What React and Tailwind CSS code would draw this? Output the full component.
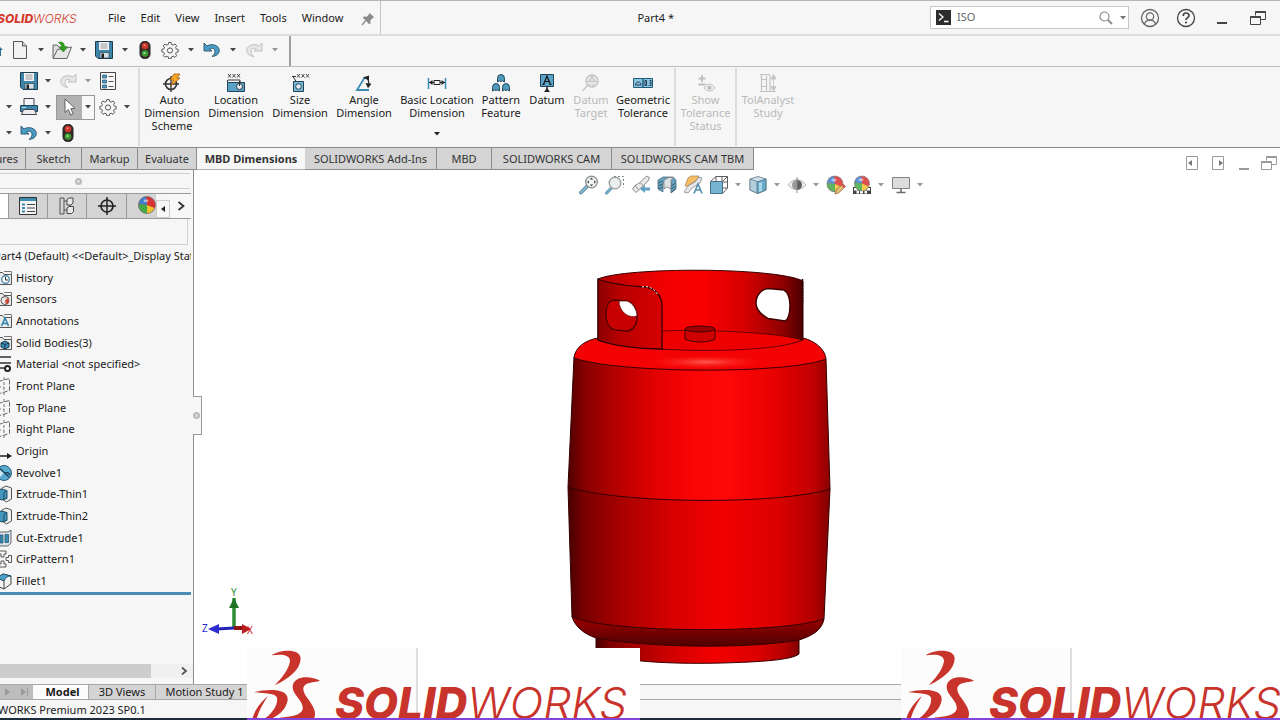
import React, { useState } from 'react';

const Svg = ({ w = 20, h = 20, box, className = "", children }) => (
  <svg width={w} height={h} viewBox={box || `0 0 ${w} ${h}`} fill="none" className={`shrink-0 ${className}`} aria-hidden="true">
    {children}
  </svg>
);

const Caret = ({ color = "#444" }) => (
  <Svg w={6} h={4}><path d="M0 0h6L3 3.5z" fill={color} /></Svg>
);

/* ---------- toolbar icons ---------- */
const NewDoc = () => (
  <Svg>
    <path d="M3.5 1.5h9l4 4.500v12.500h-13z" fill="#f1f1f1" stroke="#555" />
    <path d="M12.500 1.500v4.500h4" fill="#d5d5d5" stroke="#555" />
  </Svg>
);

const OpenDoc = () => (
  <Svg>
    <path d="M1 18V5h4l2 2h3" stroke="#666" fill="#ddd" />
    <path d="M1 18.500l4.500-9 14-2.500-4.500 11.500z" fill="#e6e6e6" stroke="#666" />
    <path d="M6.500 2.500C10 1 12.500 3 12.500 6.500h3L11.500 12 7 7.500h2.500C9.500 5 8.500 3.800 6.500 2.500z" fill="#2f9e1d" stroke="#217212" strokeWidth=".5" />
  </Svg>
);

const Save = () => (
  <Svg>
    <path d="M1.500 1.500h17v17H4l-2.500-2.500z" fill="#3f85aa" stroke="#1d3c50" />
    <path d="M5 2h10v8H5z" fill="#f5f5f5" />
    <path d="M6.500 4h7M6.500 6h7M6.500 8h7" stroke="#999" />
    <path d="M6 12.500h9V18H6z" fill="#d7dfe4" stroke="#23475c" strokeWidth=".7" />
    <path d="M7.500 13.500h2.500V18H7.500z" fill="#222" />
  </Svg>
);

const Light = () => (
  <Svg w={12} h={18}>
    <rect x="1" y=".5" width="10" height="17" rx="4.500" fill="#3b2a25" stroke="#222" />
    <circle cx="6" cy="5" r="3.300" fill="#c9362a" />
    <circle cx="5.500" cy="4.300" r="1" fill="#ff8f80" />
    <circle cx="6" cy="12.500" r="3.300" fill="#3c9a35" />
    <circle cx="5.500" cy="12" r="1.100" fill="#a2ec90" />
  </Svg>
);

const Gear = () => (
  <Svg w={18} h={18}>
    <path d="M7.800 1.500h2.400l.5 2 1.500.6 1.800-1.100 1.700 1.700-1.100 1.800.6 1.400 2 .6v2.300l-2 .6-.6 1.400 1.100 1.800-1.700 1.700-1.800-1.100-1.500.6-.5 2H7.800l-.5-2-1.500-.6L4 16.300l-1.700-1.700 1.100-1.800-.6-1.400-2-.6V8.500l2-.6.6-1.400-1.100-1.800L4 3l1.800 1.100 1.500-.6z" stroke="#555" strokeWidth="1" />
    <circle cx="9" cy="9.500" r="2.600" stroke="#555" />
  </Svg>
);

const Undo = ({ flip = false, dim = false }) => (
  <Svg w={18} h={16}>
    <g transform={flip ? "translate(18 0) scale(-1 1)" : undefined}>
      <path d="M1 1v8h8L6.500 7C9.500 5.300 12.500 7 12 10c-.2 1.700-1.200 3-3 4.500 4-.3 7.300-2.500 7.300-6C16.300 3.300 9 1 4 4z"
        fill={dim ? "#e6e6e6" : "#4b9cc4"} stroke={dim ? "#bbb" : "#24526c"} strokeWidth=".9" />
    </g>
  </Svg>
);

const Print = () => (
  <Svg>
    <path d="M5 8V1.500h10V8" fill="#f5f5f5" stroke="#445" />
    <path d="M1.500 8.500h17v6h-17z" fill="#3c86ad" stroke="#1f4459" />
    <path d="M4.500 12.500h11l2 5h-15z" fill="#ececec" stroke="#445" />
    <path d="M3 10.500h4" stroke="#bfe0f0" />
  </Svg>
);

const OptionList = () => (
  <Svg w={18} h={20}>
    <path d="M1.500 1.500h15v17h-15z" fill="#f7f7f7" stroke="#444" />
    <path d="M3.500 4h4v3h-4zM3.500 9h4v3h-4zM3.500 14h4v3h-4z" fill="#4b9cc4" stroke="#24526c" strokeWidth=".7" />
    <path d="M9.500 5.500h5M9.500 10.500h5M9.500 15.500h5" stroke="#555" />
  </Svg>
);

const Cursor = () => (
  <Svg w={14} h={18}><path d="M2 1v13.500l3.300-3 2.400 5.500 2.500-1.200-2.400-5.200 4.200-.3z" fill="#fff" stroke="#555" strokeWidth=".9" /></Svg>
);

const Pin = () => (
  <Svg w={14} h={14}>
    <path d="M8.500.8l4.700 4.700-1.500.4-2.400 2.500.2 3-1.200.8L1.800 5.700l.9-1.200 3 .2L8.200 2z" fill="#8a8a8a" />
    <path d="M4.800 8.300L1 13" stroke="#8a8a8a" strokeWidth="1.300" />
  </Svg>
);

/* ---------- ribbon icons ---------- */
const AutoIcon = () => (
  <Svg>
    <circle cx="9" cy="11" r="5.500" stroke="#333" strokeWidth="1.600" />
    <path d="M9 3v16M1 11h16" stroke="#333" strokeWidth="1.400" />
    <path d="M12 1h6l-3 4h3l-9 8 2.500-6H8z" fill="#f9a825" stroke="#a35d12" strokeWidth=".8" />
  </Svg>
);

const TinyX = ({ x }) => (
  <path d={`M${x} 1l3 3.500m0-3.500l-3 3.500m4.500-3.500l3 3.500m0-3.500l-3 3.500m4.500-3.500l3 3.500m0-3.500l-3 3.500`} stroke="#333" strokeWidth=".9" />
);

const LocationIcon = () => (
  <Svg>
    <TinyX x={2} />
    <path d="M1.500 7v2M14 7v5M2 7h12" stroke="#333" />
    <path d="M1.500 9.500h17v9h-17z" fill="#57a2c6" stroke="#1f4459" />
    <circle cx="13.500" cy="13.500" r="3" fill="#e6f2f7" stroke="#333" />
    <path d="M13.500 8v5" stroke="#333" />
  </Svg>
);

const SizeIcon = () => (
  <Svg>
    <TinyX x={7} />
    <path d="M2 3.500h4M3 3.500l5 8" stroke="#333" />
    <path d="M3.500 8.500h10v10h-10z" fill="#79b7d3" stroke="#1f4459" />
    <circle cx="8.500" cy="13.500" r="2.800" fill="#e6f2f7" stroke="#1f4459" />
  </Svg>
);

const AngleIcon = () => (
  <Svg>
    <path d="M11 4L3 17h12" stroke="#3a8cb5" strokeWidth="1.800" />
    <path d="M11 4.500c3.500 1 4.500 4 3.500 9" stroke="#222" strokeWidth="1.200" />
    <path d="M9 4.500l6-2v5zM11.500 10l6 .8-3.500 4.500z" fill="#222" />
  </Svg>
);

const BasicIcon = () => (
  <Svg>
    <path d="M1.500 5v11M18.500 5v11" stroke="#3a8cb5" strokeWidth="1.500" />
    <path d="M2 9.500h5M13 9.500h5" stroke="#222" />
    <path d="M7 7.500h6v4H7z" stroke="#222" />
    <path d="M2 9.500L5.500 7v5zM18 9.500L14.500 7v5z" fill="#222" />
  </Svg>
);

const PatternIcon = () => (
  <Svg>
    <g fill="#4f9abd" stroke="#173c50" strokeWidth=".9">
      <path d="M6.500 9V5.500a3.500 4 0 017 0V9l-2-1.200-1.500.8-1.500-.8zM1.500 18v-3.500a3.500 4 0 017 0V18l-2-1.200-1.500.8-1.500-.8zM11.500 18v-3.500a3.500 4 0 017 0V18l-2-1.200-1.500.8-1.500-.8z" />
    </g>
  </Svg>
);

const DatumIcon = () => (
  <Svg>
    <path d="M3.500 1.500h13v12h-13z" fill="#58a3c7" stroke="#1f4459" />
    <path d="M6.500 11.500L10 3l3.500 8.500M8 8.500h4M5.500 11.500h2M12.500 11.500h2" stroke="#111" strokeWidth="1.200" />
    <path d="M10 13.500V17" stroke="#222" strokeWidth="1.500" />
    <path d="M7 19l3-4 3 4z" fill="#222" />
  </Svg>
);

const TargetIcon = () => (
  <Svg>
    <circle cx="11" cy="8" r="6" fill="#e8e8e8" stroke="#c3c3c3" strokeWidth="1.300" />
    <path d="M5 8.500h12M8.500 8L11 3l2.500 5M8 11l1.500 2M13 11l-1.500 2M6.500 12.500L1.500 18" stroke="#c3c3c3" strokeWidth="1.200" />
  </Svg>
);

const GeoIcon = () => (
  <Svg>
    <path d="M.5 5.500h19v9H.5z" fill="#8cc3dd" stroke="#1f5d7d" />
    <path d="M10 5.500v9" stroke="#1f5d7d" strokeWidth="1.500" />
    <path d="M2.500 12h5.500c0-4-5.500-4-5.500 0zM12 7.500h1.500v5H12zM15 12.500h.5M16.500 7.500H18v5h-1.500M16.500 10H18" stroke="#1f3c50" />
  </Svg>
);

const StatusIcon = () => (
  <Svg>
    <path d="M6 2v7M2.500 5.500h7M2.500 11.500h7" stroke="#bdbdbd" strokeWidth="1.800" />
    <path d="M8 15c3-5 8-5 11 0-3 4-8 4-11 0z" stroke="#c3c3c3" fill="#eee" />
    <circle cx="13.500" cy="14.700" r="2" fill="#bbb" />
  </Svg>
);

const TolIcon = () => (
  <Svg>
    <path d="M2 1.500h10M2 18.500h16M3.500 2v16M3.500 6.500h5v-4M3.500 13.500h5v4M8.500 6.500v7M12 2v16" stroke="#c3c3c3" strokeWidth="1.200" />
    <path d="M15.500 4v12M15.500 1.500L13 6h5zM15.500 18L13 13.500h5z" fill="#c3c3c3" stroke="#c3c3c3" strokeWidth=".8" />
  </Svg>
);

/* ---------- heads-up view icons ---------- */
const Ball = ({ r = 7, cx = 9, cy = 8 }) => (
  <g>
    <circle cx={cx} cy={cy} r={r} fill="#d93232" />
    <path d={`M${cx} ${cy}L${cx - r} ${cy - 1}A${r} ${r} 0 0 1 ${cx - 1} ${cy - r}z`} fill="#3d7fd1" />
    <path d={`M${cx} ${cy}L${cx - r} ${cy - 1}A${r} ${r} 0 0 0 ${cx} ${cy + r}z`} fill="#43a947" />
    <path d={`M${cx} ${cy}L${cx} ${cy + r}A${r} ${r} 0 0 0 ${cx + r - 1} ${cy + 3}z`} fill="#f1c22e" />
    <circle cx={cx} cy={cy} r={r} stroke="#666" strokeWidth=".6" />
    <ellipse cx={cx - 1} cy={cy - r / 2} rx="2.500" ry="1.500" fill="#fff" opacity=".5" />
  </g>
);

const ZoomFit = () => (
  <Svg>
    <path d="M2 17.500l6-6" stroke="#2e6582" strokeWidth="3.600" strokeLinecap="round" />
    <path d="M2 17.500l6-6" stroke="#78b4d0" strokeWidth="1.800" strokeLinecap="round" />
    <circle cx="12.500" cy="7" r="5.800" fill="#eef3f5" stroke="#777" strokeWidth="1.300" />
    <path d="M12.500 2.500l1.800 2h-3.600zM12.500 11.500l1.800-2h-3.600zM8 7l2-1.800v3.600zM17 7l-2-1.800v3.600z" fill="#333" />
  </Svg>
);

const ZoomArea = () => (
  <Svg>
    <path d="M9 1.500h9.500v11" stroke="#666" strokeDasharray="2 2" />
    <path d="M1.500 18l5-5" stroke="#5d9ab7" strokeWidth="3.200" strokeLinecap="round" />
    <circle cx="10" cy="8" r="5.800" fill="#e5eaec" stroke="#8b8b8b" strokeWidth="1.300" />
  </Svg>
);

const PrevView = () => (
  <Svg>
    <path d="M1.500 14l2.500-3.500 5-3L15.500 1l3 1.500L17 6l-5.500 5.500L5 17.500z" fill="#e4e4e4" stroke="#777" />
    <path d="M9 7.500l3.500 3.500M4 10.500l3.500 4" stroke="#777" />
    <path d="M9 14l5-4v2.500h5v3h-5V18z" fill="#4291b8" />
  </Svg>
);

const SectionView = () => (
  <Svg>
    <path d="M1 5l5-3h10l3 3v9l-5 4V8H6v9l-5-3z" fill="#4892b7" stroke="#315566" strokeWidth=".8" />
    <path d="M7 5l5-2.500h5L14 5v9l-4-2-3 2z" fill="#d8dee1" stroke="#666" strokeWidth=".8" />
    <path d="M1.500 8l4-2M1.500 11l4-2M1.500 14l4-2M14.500 11l4-3M14.500 14l4-3M14.500 17l4-3" stroke="#173c50" />
  </Svg>
);

const DynAnno = () => (
  <Svg>
    <path d="M5 3l3-2h8l-3 5-9 5H2z" fill="#f4b24a" stroke="#9b763f" strokeWidth=".8" />
    <path d="M1 17l4-6 7-4 4-5 3 1-2 5-8 5-4 5z" fill="#e2e2e2" stroke="#777" strokeWidth=".8" />
    <path d="M11 18.500l4-9.500 4 9.500M12.500 15h5" stroke="#3779a0" strokeWidth="1.600" />
  </Svg>
);

const ViewOrient = () => (
  <Svg>
    <path d="M1.500 6.500h12v12h-12z" fill="#5fa9cb" stroke="#285a74" />
    <path d="M2 6L7 1.500h11.500V13l-5 5.500M13.500 6.500l5-5M7 1.500v5M13 1.500v5M18.500 7h-5M18.500 13h-5" stroke="#444" />
  </Svg>
);

const DisplayStyle = () => (
  <Svg>
    <path d="M2 4l8-2.500 8 2.500v11l-8 3.500L2 15z" fill="#c9dce6" stroke="#5e7986" />
    <path d="M2 4l8 3v11.500L2 15z" fill="#a8c8d7" stroke="#5e7986" />
    <path d="M9 7l9-3v11l-9 3.500z" fill="#4f9cc0" stroke="#3d6a80" />
    <path d="M11 8l3-1v9l-3 1z" fill="#9bd0e8" />
  </Svg>
);

const HideShow = () => (
  <Svg>
    <path d="M1 10c5-7 13-7 18 0-5 6-13 6-18 0z" fill="#ececec" stroke="#aaa" />
    <path d="M10 5a5 5 0 000 10z" fill="#888" />
    <path d="M10 5a5 5 0 010 10z" fill="#444" />
    <path d="M10 2v16" stroke="#777" />
  </Svg>
);

const EditAppearance = () => (
  <Svg>
    <Ball r={8} cy={9} />
    <path d="M9 19l1-4 7-6 2.500 2.500-7 6.500z" fill="#e4b15a" stroke="#7d4d27" strokeWidth=".8" />
    <path d="M15.500 10.500l2.500 2.500 1.500-1.500L17 9z" fill="#c73b31" />
  </Svg>
);

const ApplyScene = () => (
  <Svg>
    <path d="M1 12h18v7H1z" fill="#222" />
    <path d="M2 13h3v2.500H2zM15 13h3v2.500h-3zM8 15.500h3v3H8zM4.500 15.500h2.500v3H4.500zM12.500 15.500H15v3h-2.500z" fill="#fff" />
    <Ball r={7.500} cx={10} cy={8.500} />
  </Svg>
);

const ViewSettings = () => (
  <Svg>
    <path d="M1.500 2.500h17v11h-17z" fill="#d6d6d6" stroke="#6b6b6b" />
    <path d="M10 14v3M5.500 17.500h9" stroke="#555" strokeWidth="1.600" />
  </Svg>
);

/* ---------- feature tree icons ---------- */
const Folder = ({ children }) => (
  <Svg w={16} h={16}>
    <path d="M.5 14.500v-12h6l1.500 2h7.500v10z" fill="#ececec" stroke="#555" />
    <path d="M8 1.500h7.500v3" stroke="#777" />
    {children}
  </Svg>
);
const HistoryIcon = () => <Folder><circle cx="9.500" cy="9.500" r="3.800" fill="#fff" stroke="#4d8eae" strokeWidth="1.400" /><path d="M9.500 7v3h2.500" stroke="#333" /></Folder>;
const SensorIcon = () => <Folder><circle cx="9" cy="9.500" r="4" fill="#e8e8e8" stroke="#555" /><path d="M9 9.500l3.500-3 .5 5-3 2z" fill="#cf4834" /></Folder>;
const NotesIcon = () => <Folder><path d="M5.500 13l3.500-8 3.500 8M7 10.500h4" stroke="#3484ae" strokeWidth="1.600" /></Folder>;
const BodiesIcon = () => <Folder><path d="M5 8l4-2 4 2v4l-4 2-4-2z" fill="#3c8db4" stroke="#173c50" /><path d="M5 8l4 1.500L13 8M9 9.500V14" stroke="#173c50" /></Folder>;
const MaterialIcon = () => (
  <Svg w={16} h={16}>
    <path d="M0 1h15M0 7h15M0 12h8" stroke="#333" strokeWidth="1.600" />
    <circle cx="11.500" cy="12.500" r="2.500" fill="#fff" stroke="#222" strokeWidth="2" />
  </Svg>
);
const PlaneIcon = () => (
  <Svg w={16} h={18}>
    <path d="M2 4.500L13.500 1.500v12L2 17z" stroke="#666" strokeDasharray="5 1.500" />
    <path d="M8 0v18M2 10h6" stroke="#777" strokeDasharray="3 2" />
  </Svg>
);
const OriginIcon = () => (
  <Svg w={16} h={18}><path d="M3 3v11h9" stroke="#222" strokeWidth="1.400" /><path d="M11 11l5 3-5 3z" fill="#222" /></Svg>
);
const RevolveIcon = () => (
  <Svg w={18} h={18}>
    <circle cx="8" cy="9" r="7.500" fill="#58a9cf" stroke="#2b5d77" />
    <path d="M3 5l5 4-4 4" fill="#cfe8f3" />
    <path d="M3 4l10 9M9 9c2-1 4 0 5 2" stroke="#173c50" strokeWidth="1.300" />
  </Svg>
);
const ExtrudeIcon = () => (
  <Svg w={16} h={18}>
    <path d="M6 3l4-2 5.500 2v11l-5 3-4.500-3z" fill="#efefef" stroke="#555" />
    <path d="M1 6l4-2 6 1.500v8L6 15l-5-2z" fill="#4397bf" stroke="#1e4a61" />
    <path d="M11 5.500l-3 2V14" stroke="#1e4a61" />
  </Svg>
);
const CutIcon = () => (
  <Svg w={16} h={18}>
    <path d="M1 3h11l3-2v13l-3 3H1z" fill="#d9e3e8" stroke="#666" />
    <path d="M4 6h3v8H4zM9 5.500h3.500v8H9z" fill="#3c8db4" stroke="#24526c" strokeWidth=".7" />
  </Svg>
);
const CirIcon = () => (
  <Svg w={16} h={18}>
    <path d="M2 1h8v3H8v3H5V4H2zM15.500 5.500v7h-3v-2H10v-3h2.500v-2zM2 17h8v-3H8v-3H5v3H2z" stroke="#555" />
  </Svg>
);
const FilletIcon = () => (
  <Svg w={16} h={18}>
    <path d="M1 6l6-4 8 2v8l-7 5-7-3z" fill="#f2f2f2" stroke="#444" />
    <path d="M1 6l6-4 8 2c-4 0-6 2-7 5z" fill="#4ba1c8" stroke="#24526c" />
    <path d="M8 9v8" stroke="#444" />
  </Svg>
);

const ribbon = [
  { label: ["Auto", "Dimension", "Scheme"], icon: AutoIcon, width: "w-16" },
  { label: ["Location", "Dimension"], icon: LocationIcon, width: "w-16" },
  { label: ["Size", "Dimension"], icon: SizeIcon, width: "w-16" },
  { label: ["Angle", "Dimension"], icon: AngleIcon, width: "w-16" },
  { label: ["Basic Location", "Dimension"], icon: BasicIcon, width: "w-[82px]", menu: true },
  { label: ["Pattern", "Feature"], icon: PatternIcon, width: "w-[46px]" },
  { label: ["Datum"], icon: DatumIcon, width: "w-[46px]" },
  { label: ["Datum", "Target"], icon: TargetIcon, width: "w-[42px]", disabled: true },
  { label: ["Geometric", "Tolerance"], icon: GeoIcon, width: "w-[62px]" },
  { label: ["Show", "Tolerance", "Status"], icon: StatusIcon, width: "w-[61px]", disabled: true, divider: true },
  { label: ["TolAnalyst", "Study"], icon: TolIcon, width: "w-16", disabled: true, divider: true },
];

const tabs = [
  { name: "Features", width: "w-[26px]" },
  { name: "Sketch", width: "w-[56px]" },
  { name: "Markup", width: "w-[56px]" },
  { name: "Evaluate", width: "w-[59px]" },
  { name: "MBD Dimensions", width: "w-[108px]" },
  { name: "SOLIDWORKS Add-Ins", width: "w-[132px]" },
  { name: "MBD", width: "w-[55px]" },
  { name: "SOLIDWORKS CAM", width: "w-[120px]" },
  { name: "SOLIDWORKS CAM TBM", width: "w-[142px]" },
];

const features = [
  ["History", HistoryIcon],
  ["Sensors", SensorIcon],
  ["Annotations", NotesIcon],
  ["Solid Bodies(3)", BodiesIcon],
  ["Material <not specified>", MaterialIcon],
  ["Front Plane", PlaneIcon],
  ["Top Plane", PlaneIcon],
  ["Right Plane", PlaneIcon],
  ["Origin", OriginIcon],
  ["Revolve1", RevolveIcon],
  ["Extrude-Thin1", ExtrudeIcon],
  ["Extrude-Thin2", ExtrudeIcon],
  ["Cut-Extrude1", CutIcon],
  ["CirPattern1", CirIcon],
  ["Fillet1", FilletIcon],
];

const hud = [
  [ZoomFit], [ZoomArea], [PrevView], [SectionView], [DynAnno], [ViewOrient, true],
  [DisplayStyle, true], [HideShow, true], [EditAppearance], [ApplyScene, true], [ViewSettings, true],
];

const Cell = ({ label, className = "w-[21px]", children }) => (
  <button aria-label={label} className={`flex shrink-0 items-center justify-center ${className}`}>{children}</button>
);

const Restore = ({ color }) => (
  <Svg w={16} h={14}>
    <path d="M5.500 4.500v-4h10v8h-5" stroke={color} /><path d="M5.500 1h10" stroke={color} strokeWidth="2" />
    <path d="M.5 5.500h10v8H.5z" stroke={color} /><path d="M.5 6h10" stroke={color} strokeWidth="2" />
  </Svg>
);

const TitleBar = () => (
  <header className="flex h-9 shrink-0 border-t border-b-2 border-t-[#b5b5b5] border-b-[#dcdcdc]">
    <div className="flex shrink-0 items-center border-r border-[#c4c4c4] pr-1 pt-0.5">
      <div className="-ml-[3px] w-[111px] font-[Inter,sans-serif] text-[12px] italic text-[#d5392c]">
        <b className="font-extrabold">SOLID</b><span className="font-light">WORKS</span>
      </div>
      <nav className="flex gap-[15px]">
        {["File", "Edit", "View", "Insert", "Tools", "Window"].map((m) => <button key={m}>{m}</button>)}
      </nav>
      <Cell label="Pin menu" className="ml-[17px] w-4"><Pin /></Cell>
    </div>
    <h1 className="flex flex-1 items-center justify-center pt-0.5">Part4 *</h1>
    <div className="flex items-center pr-1">
      <div className="mr-[3px] flex h-[23px] w-[199px] items-center border border-[#c6c6c6] bg-white px-[5px]">
        <Svg w={15} h={15}>
          <path d="M0 0h15v15H0z" fill="#2c2c2c" />
          <path d="M3 3.500l4 3.500-4 3.500M8 11.500h4.500" stroke="#fff" strokeWidth="1.300" />
        </Svg>
        <input aria-label="Search commands" defaultValue="ISO" className="ml-1.5 min-w-0 flex-1 text-[#666] outline-none" />
        <Svg w={14} h={14}>
          <circle cx="5.500" cy="5.500" r="4.500" stroke="#888" strokeWidth="1.200" /><path d="M9 9l4 4" stroke="#888" strokeWidth="1.800" />
        </Svg>
        <Cell label="Search options" className="ml-1.5 -mr-1 w-2"><Caret color="#777" /></Cell>
      </div>
      <Cell label="Account" className="w-9">
        <Svg w={20} h={20}>
          <circle cx="10" cy="10" r="8.500" stroke="#666" strokeWidth="1.300" />
          <circle cx="10" cy="8.500" r="3.700" stroke="#666" strokeWidth="1.200" />
          <path d="M4.500 16c1-3 3-3.800 5.500-3.800s4.500.8 5.500 3.800" stroke="#666" strokeWidth="1.200" />
        </Svg>
      </Cell>
      <Cell label="Help" className="w-9">
        <Svg w={20} h={20}>
          <circle cx="10" cy="10" r="8.500" stroke="#444" strokeWidth="1.300" />
          <path d="M7.200 8c0-4 5.800-3.800 5.800-.5 0 2-3 2.200-3 4.500" stroke="#444" strokeWidth="1.700" /><circle cx="10" cy="14.500" r="1.100" fill="#444" />
        </Svg>
      </Cell>
      <Cell label="Minimize" className="w-9"><Svg w={10} h={12}><path d="M0 11h10" stroke="#444" strokeWidth="2" /></Svg></Cell>
      <Cell label="Restore" className="w-9"><Restore color="#444" /></Cell>
    </div>
  </header>
);

const QuickBar = () => (
  <div className="flex h-[31px] shrink-0 border-b border-[#c0c0c0]">
    <div className="flex w-[291px] items-center border-r-2 border-[#a0a0a0] pb-0.5">
      <Cell label="Home" className="w-[9px] justify-start!"><Svg w={4} h={14}><path d="M-5 7l3-5 5 5h-2v6h-6" fill="#2f6f92" /></Svg></Cell>
      <Cell label="New"><NewDoc /></Cell><Cell label="New options"><Caret /></Cell>
      <Cell label="Open"><OpenDoc /></Cell><Cell label="Open options"><Caret /></Cell>
      <Cell label="Save"><Save /></Cell><Cell label="Save options"><Caret /></Cell>
      <Cell label="Rebuild" className="w-5"><Light /></Cell>
      <Cell label="Options" className="ml-1 w-[21px]"><Gear /></Cell><Cell label="More options"><Caret /></Cell>
      <Cell label="Undo"><Undo /></Cell><Cell label="Undo list"><Caret /></Cell>
      <Cell label="Redo"><Undo flip dim /></Cell><Cell label="Redo list"><Caret color="#999" /></Cell>
    </div>
  </div>
);

const Ribbon = () => (
  <div className="flex h-[81px] shrink-0 border-b border-[#8c8c8c] py-px">
    <div className="flex w-[140px] flex-col border-r-2 border-[#dcdcdc]">
      <div className="flex h-[26px] items-center pl-[18px]">
        <Cell label="Save"><Save /></Cell><Cell label="Save options" className="w-[18px]"><Caret /></Cell>
        <Cell label="Redo"><Undo flip dim /></Cell><Cell label="Redo list" className="w-[19px]"><Caret color="#999" /></Cell>
        <Cell label="File properties"><OptionList /></Cell>
      </div>
      <div className="flex h-[26px] items-center">
        <Cell label="More" className="w-[18px]"><Caret /></Cell>
        <Cell label="Print"><Print /></Cell><Cell label="Print options" className="w-[17px]"><Caret /></Cell>
        <div className="flex h-[25px] border border-[#999]">
          <Cell label="Select" className="w-[25px] bg-[#b1b1b1]"><Cursor /></Cell>
          <Cell label="Select options" className="w-3 bg-[#f8f8f8]"><Caret /></Cell>
        </div>
        <Cell label="Options" className="ml-[2px] w-[21px]"><Gear /></Cell><Cell label="More options" className="w-[18px]"><Caret /></Cell>
      </div>
      <div className="flex h-[25px] items-center">
        <Cell label="More" className="w-[18px]"><Caret /></Cell>
        <Cell label="Undo"><Undo /></Cell><Cell label="Undo list" className="w-[18px]"><Caret /></Cell>
        <Cell label="Rebuild"><Light /></Cell>
      </div>
    </div>
    {ribbon.map(({ label, icon: Icon, width, menu, disabled, divider }) => (
      <button
        key={label.join(" ")}
        disabled={disabled}
        className={`flex shrink-0 flex-col items-center pt-[5px] leading-[13px] ${width} ${disabled ? "text-[#b9b9b9]" : ""} ${divider ? "border-l-2 border-[#dcdcdc]" : ""}`}
      >
        <Icon />
        <span>
          {label.map((line) => <span key={line} className="block whitespace-nowrap">{line}</span>)}
        </span>
        {menu && <span className="mt-[13px]"><Caret color="#222" /></span>}
      </button>
    ))}
  </div>
);

const TabRow = () => {
  const [active, setActive] = useState("MBD Dimensions");

  return (
    <div className="flex h-[22px] shrink-0 justify-between bg-white">
      <div role="tablist" className="flex">
        {tabs.map(({ name, width }) => (
          <button
            key={name}
            role="tab"
            aria-selected={active === name}
            onClick={() => setActive(name)}
            className={`flex shrink-0 items-center justify-center overflow-hidden whitespace-nowrap border-b pt-px ${width} ${name === "Features" ? "justify-end! pr-[7px]" : ""} ${active === name ? "border-[#b0b0b0] bg-[#f7f7f7] font-bold text-[#333]" : "border-r border-[#8c8c8c] bg-[#d4d4d4] text-[#333]"}`}
          >
            {name}
          </button>
        ))}
      </div>
      <div className="flex items-end">
        <Cell label="Collapse left" className="w-[26px]"><Svg w={12} h={14}><path d="M.5.500h11v13H.5z" stroke="#999" /><path d="M2 7l4-3v6z" fill="#777" /></Svg></Cell>
        <Cell label="Collapse right" className="w-[26px]"><Svg w={12} h={14}><path d="M.5.500h11v13H.5z" stroke="#999" /><path d="M11 7L7 4v6z" fill="#777" /></Svg></Cell>
        <Cell label="Minimize document" className="w-[26px]"><Svg w={10} h={12}><path d="M0 11h10" stroke="#999" strokeWidth="2" /></Svg></Cell>
        <Cell label="Restore document" className="w-[23px]"><Restore color="#999" /></Cell>
      </div>
    </div>
  );
};

const SidePanel = () => (
  <aside className="relative z-10 flex w-[194px] shrink-0 flex-col border-r border-[#8c8c8c]">
    <div className="mr-[3px] mt-[3px] flex h-4 items-center border-y border-[#cfcfcf] pl-[75px]">
      <span className="size-[7px] rounded-full border-2 border-[#bbb] bg-[#ddd]" />
    </div>
    <div className="mr-[2px] mt-1 flex h-[26px] border-y border-[#999]">
      <span className="w-2 bg-white" />
      <Cell label="Property manager" className="w-10 border-x border-[#999] bg-[#d4d4d4]">
        <Svg w={18} h={18}>
          <path d="M.5.500h17v17H.5z" fill="#f5f5f5" stroke="#333" /><path d="M1 1h16v3H1z" fill="#3d8bb1" />
          <path d="M3 7.500h3M3 11h3M3 14.500h3" stroke="#3d8bb1" strokeWidth="2" /><path d="M8 7.500h8M8 11h8M8 14.500h8" stroke="#444" />
        </Svg>
      </Cell>
      <Cell label="Configurations" className="w-[39px] border-r border-[#999] bg-[#d4d4d4]">
        <Svg w={16} h={18}>
          <path d="M1 1h4v16H1zM5 4h3M5 13h3" stroke="#555" />
          <path d="M8 2.500l2-1.500h4v5l-2 2H8zM8 11l2-1.500h4.500v5l-2 2H8z" fill="#e8e8e8" stroke="#444" />
          <path d="M11 8v2" stroke="#444" />
        </Svg>
      </Cell>
      <Cell label="DimXpert" className="w-10 border-r border-[#999] bg-[#d4d4d4]">
        <Svg w={18} h={18}><circle cx="9" cy="9" r="6" stroke="#222" strokeWidth="1.700" /><path d="M9 0v18M0 9h18" stroke="#222" strokeWidth="1.500" /></Svg>
      </Cell>
      <Cell label="Display" className="w-[29px] justify-end! overflow-hidden bg-[#d4d4d4]"><Svg w={20} h={20}><Ball cx={11} cy={9} r={8.500} /></Svg></Cell>
      <Cell label="Scroll left" className="mt-[6px] w-[14px] border border-[#ccc] bg-[#f7f7f7]"><Svg w={4} h={6}><path d="M4 0v6L0 3z" fill="#222" /></Svg></Cell>
      <Cell label="Scroll right" className="w-[21px] bg-[#f7f7f7]"><Svg w={8} h={10}><path d="M1.500 1l5 4-5 4" stroke="#333" strokeWidth="1.800" /></Svg></Cell>
    </div>
    <input aria-label="Filter" className="mr-[5px] h-[26px] border border-l-0 border-t-0 border-[#cfcfcf]" />
    <div className="mr-[2px] flex h-[22px] items-center overflow-hidden whitespace-nowrap">
      <span className="-ml-1.5">Part4 (Default) &lt;&lt;Default&gt;_Display State 1&gt;</span>
    </div>
    <ul className="grid h-[325px] auto-rows-fr">
      {features.map(([name, Icon]) => (
        <li key={name} className="flex items-center">
          <span className="-ml-1 flex w-5 shrink-0"><Icon /></span>
          {name}
        </li>
      ))}
    </ul>
    <div className="mr-[2px] h-[3px] bg-[#4c8bb5]" />
    <div className="flex-1" />
    <div className="mb-[6px] flex h-[14px] items-center justify-between bg-[#f0f0f0] pr-[5px]">
      <div className="h-full w-[151px] bg-[#cdcdcd]" />
      <Cell label="Scroll tree right" className="w-2"><Svg w={7} h={8}><path d="M1 .5l4 3.500-4 3.500" stroke="#555" strokeWidth="1.800" /></Svg></Cell>
    </div>
    {/* splitter grip */}
    <div className="absolute left-[193px] top-[226px] flex h-[39px] w-[9px] items-center border border-l-0 border-[#999] bg-[#f7f7f7]">
      <span className="size-[7px] rounded-full border-2 border-[#bbb] bg-[#ddd]" />
    </div>
  </aside>
);

const Cylinder = () => (
  <svg width="280" height="410" viewBox="560 260 280 410" className="absolute left-[366px] top-[90px]" role="img" aria-label="Part4">
    <defs>
      <linearGradient id="body">
        <stop offset="0" stopColor="#4d0000" /><stop offset=".06" stopColor="#850000" /><stop offset=".18" stopColor="#b40000" />
        <stop offset=".32" stopColor="#df0000" /><stop offset=".48" stopColor="#fb0404" /><stop offset=".6" stopColor="#ff0808" />
        <stop offset=".78" stopColor="#e90000" /><stop offset=".93" stopColor="#c20000" /><stop offset="1" stopColor="#8d0000" />
      </linearGradient>
      <linearGradient id="lower">
        <stop offset="0" stopColor="#460000" /><stop offset=".06" stopColor="#780000" /><stop offset=".2" stopColor="#a80000" />
        <stop offset=".4" stopColor="#d60000" /><stop offset=".58" stopColor="#f20000" /><stop offset=".8" stopColor="#dc0000" />
        <stop offset=".93" stopColor="#b40000" /><stop offset="1" stopColor="#800000" />
      </linearGradient>
      <linearGradient id="inner">
        <stop offset="0" stopColor="#b00000" /><stop offset=".3" stopColor="#f00000" /><stop offset=".5" stopColor="#fa0000" />
        <stop offset=".72" stopColor="#d40000" /><stop offset=".9" stopColor="#900000" /><stop offset="1" stopColor="#4a0000" />
      </linearGradient>
      <linearGradient id="flap">
        <stop offset="0" stopColor="#8a0000" /><stop offset=".35" stopColor="#b80000" /><stop offset="1" stopColor="#d80000" />
      </linearGradient>
      <linearGradient id="base" x1="0" x2="0" y1="0" y2="1">
        <stop offset="0" stopColor="#a00000" /><stop offset="1" stopColor="#500000" />
      </linearGradient>
      <radialGradient id="shine">
        <stop offset="0" stopColor="#ff5a50" /><stop offset="1" stopColor="#ff1010" stopOpacity="0" />
      </radialGradient>
    </defs>
    <g stroke="#350000" strokeWidth="1">
      <path d="M596 634V653C630 663 680 664 722 663C760 662 792 660 799 654V636z" fill="url(#lower)" />
      <path d="M572 616C574 626 584 634 596 638C650 648 750 649 799 640C812 636 822 630 824 619z" fill="url(#base)" />
      <path d="M568 487L572 617C610 633 780 634 824 619L830 489z" fill="url(#lower)" />
      <path d="M574 357L568 487C620 504 780 505 830 489L826 359z" fill="url(#body)" />
      <path d="M574 358C575 347 586 340 598 338H803C815 341 825 349 826 359C790 374 620 374 574 358z" fill="#f30303" />
    </g>
    <ellipse cx="706" cy="362" rx="60" ry="7" fill="url(#shine)" />
    <path d="M598 279C625 267 775 267 803 281V340C770 353 630 353 598 340z" fill="url(#inner)" stroke="#350000" />
    <path d="M661 331C720 329 785 334 802 340C780 351 700 352 662 349z" fill="#ee0000" stroke="#500000" strokeWidth=".8" />
    <path d="M768 288.500L784 290C788 292 790 299 790 305C790 312 789 319 785 321L768 318.500C760 314 756 309 756 303C756 296 761 289 768 288.500z" fill="#fff" stroke="#400000" strokeWidth="1.500" />
    <path d="M802.500 279V302" stroke="#300" strokeWidth="1.500" strokeDasharray="2 1" />
    <path d="M685 329V339C692 343 709 343 715 339V329" fill="#d10000" stroke="#400000" />
    <ellipse cx="700" cy="329" rx="15" ry="3" fill="#9c0000" stroke="#400000" />
    <path d="M598 279C610 284 630 286 645 287C656 288 662 297 662 306V349C635 349 610 345 598 340z" fill="url(#flap)" stroke="#300000" strokeWidth="1.300" />
    <path d="M642 287Q652 285 658 295" stroke="#fff" fill="none" strokeWidth="1" strokeDasharray="2 2" />
    <path d="M615 300L626 301C633 302 637 309 637 317C637 325 633 331 626 331L616 330C609 329 606 322 606 314C606 306 609 300 615 300z" fill="#c80000" stroke="#500000" strokeWidth="1.500" />
    <path d="M619 301H627C633 303 637 310 637 316C628 319 619 311 619 301z" fill="#fff" stroke="#600000" strokeWidth=".7" />
  </svg>
);

const Triad = () => (
  <svg width="60" height="56" className="absolute bottom-[42px] left-[6px]" role="img" aria-label="View axes">
    <path d="M34 12v30" stroke="#2c8b33" strokeWidth="3.500" />
    <path d="M34 12l-5 10h10z" fill="#1e7326" />
    <path d="M34 42l-17 1" stroke="#2323b5" strokeWidth="3" />
    <path d="M8 43l11-5v10z" fill="#2c2cd0" />
    <path d="M34 42h9" stroke="#8e1414" strokeWidth="4" />
    <path d="M42 38l9 5-9 5z" fill="#b81c1c" />
    <text x="31" y="10" fontSize="10" fill="#2c8b33">Y</text>
    <text x="2" y="46" fontSize="10" fill="#2a2acb">Z</text>
    <text x="47" y="48" fontSize="10" fill="#d02020">X</text>
  </svg>
);

const Viewport = () => (
  <main className="relative min-w-0 flex-1 bg-white">
    <div className="flex h-[29px] items-center justify-center pl-7">
      {hud.map(([Icon, menu], i) => (
        <React.Fragment key={i}>
          <Cell label={`View tool ${i + 1}`} className="w-[26px] opacity-85"><Icon /></Cell>
          {menu && <Cell label={`View tool ${i + 1} menu`} className="w-[13px]"><Caret color="#999" /></Cell>}
        </React.Fragment>
      ))}
    </div>
    <Cylinder />
    <Triad />
  </main>
);

const BottomTabs = () => (
  <div className="flex h-4 shrink-0 border-y border-[#a8a8a8] leading-[14px]">
    <div className="flex w-[33px] items-center justify-around bg-[#bdbdbd]">
      <Svg w={5} h={8}><path d="M0 0l5 4-5 4z" fill="#999" /></Svg>
      <Svg w={7} h={8}><path d="M0 0l5 4-5 4zM6 0h1v8H6z" fill="#999" /></Svg>
    </div>
    <button className="w-[55px] bg-[#fbfbfb] pl-1 font-bold">Model</button>
    <button className="w-[68px] border-x border-[#a8a8a8] bg-[#d4d4d4]">3D Views</button>
    <button className="w-[98px] border-r border-[#a8a8a8] bg-[#d4d4d4]">Motion Study 1</button>
  </div>
);

const Watermark = ({ className }) => (
  <div className={`absolute bottom-0 z-20 flex h-[72px] w-[393px] overflow-hidden border-b-2 border-[#8245dc] bg-white ${className}`}>
    <div className="h-full w-[171px] shrink-0 border-r-2 border-[#dedede] bg-[#fcfcfc]">
      <svg width="80" height="70" viewBox="21 24 240 210" fill="#c8332b" aria-hidden="true">
        <path d="M95 46C118 28 182 24 182 56C180 90 148 114 104 136C128 112 146 88 150 64C151 43 122 42 95 46z" />
        <path d="M240 122C213 107 163 106 158 138C156 166 192 182 188 207C184 228 150 229 120 233V236H222C238 198 186 172 190 143C194 126 220 128 240 122z" />
        <path d="M42 157C90 145 146 147 143 180C139 207 118 225 94 236H74C104 213 114 190 111 173C107 160 75 160 42 157z" />
        <path d="M84 168C64 184 44 210 37 236H50C57 211 69 190 84 168z" />
      </svg>
    </div>
    <div className="-ml-[83px] shrink-0 pt-[25px] font-[Inter,sans-serif] text-[44px] leading-[60px] italic text-[#c8332b]">
      <b className="font-extrabold">SOLID</b><span className="font-light">WORKS</span>
    </div>
  </div>
);

export default function App() {
  return (
    <div className="relative flex h-screen flex-col overflow-hidden bg-[#f6f6f6] font-['Noto_Sans',sans-serif] text-[11px] text-[#1a1a1a]">
      <TitleBar />
      <QuickBar />
      <Ribbon />
      <TabRow />
      <div className="flex min-h-0 flex-1">
        <SidePanel />
        <Viewport />
      </div>
      <BottomTabs />
      <footer className="h-5 shrink-0 overflow-hidden whitespace-nowrap border-b-2 border-[#1d2b3a] leading-5">
        <span className="-ml-[34px]">SOLIDWORKS Premium 2023 SP0.1</span>
      </footer>
      <Watermark className="left-[247px]" />
      <Watermark className="left-[901px]" />
    </div>
  );
}
